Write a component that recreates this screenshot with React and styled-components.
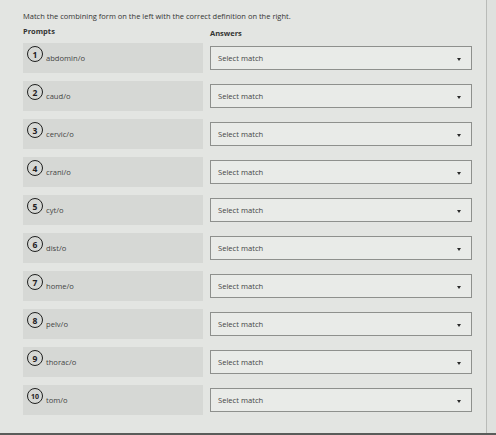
import React from 'react'
import styled, { createGlobalStyle } from "styled-components"

const GlobalStyle = createGlobalStyle`
    html, body {
        margin: 0;
        padding: 0;
        background: #5a5c5a;
    }
`

const Screen = styled.div`
    width: 496px;
    height: 433px;
    box-sizing: border-box;
    background: #dfe1de;
    display: flex;
    font-family: "Open Sans", "Liberation Sans", sans-serif;
`

const Panel = styled.div`
    width: 487px;
    box-sizing: border-box;
    background: #e3e5e2;
    border-right: 1px solid #b9bbb8;
    padding: 11px 0 0 23px;
`

const Instruction = styled.p`
    margin: 0 0 2px;
    font-size: 7.5px;
    color: #333433;
`

const Grid = styled.div`
    display: grid;
    grid-template-columns: 180px 262px;
    column-gap: 7px;
    row-gap: 8px;
    align-items: center;
    width: 453px;
    padding-bottom: 18px;
    border-bottom: 1px solid #b9bbb8;
`

const Heading = styled.div`
    font-size: 7.5px;
    font-weight: 700;
    color: #333433;
    padding-top: ${p => p.$drop || 0}px;
    margin-bottom: -3px;
`

const PromptCell = styled.div`
    height: 30px;
    background: #d6d8d5;
    display: flex;
    align-items: flex-start;
    padding: 3px 0 0 4px;
    box-sizing: border-box;
`

const Badge = styled.span`
    width: 14px;
    height: 14px;
    border: 1.5px solid #1f201f;
    border-radius: 50%;
    display: flex;
    align-items: center;
    justify-content: center;
    font-size: ${p => p.$small ? 7 : 8.5}px;
    font-weight: 700;
    color: #1f201f;
    flex-shrink: 0;
`

const Term = styled.span`
    font-size: 7.6px;
    color: #444544;
    margin: 7px 0 0 3px;
`

const Select = styled.div`
    height: 24px;
    box-sizing: border-box;
    border: 1px solid #8e908d;
    background: #e9ebe8;
    display: flex;
    align-items: center;
    justify-content: space-between;
    padding: 0 10px 0 7px;
    font-size: 7.6px;
    color: #444544;
`

const Caret = styled.span`
    width: 0;
    height: 0;
    border-left: 2.5px solid transparent;
    border-right: 2.5px solid transparent;
    border-top: 3px solid #2a2b2a;
    margin-top: 2px;
`

const terms = ['abdomin/o', 'caud/o', 'cervic/o', 'crani/o', 'cyt/o', 'dist/o', 'home/o', 'pelv/o', 'thorac/o', 'tom/o']

function App() {
    return (
        <>
            <GlobalStyle />
            <Screen>
                <Panel>
                    <Instruction>Match the combining form on the left with the correct definition on the right.</Instruction>
                    <Grid>
                        <Heading>Prompts</Heading>
                        <Heading $drop={5}>Answers</Heading>
                        {terms.map((t, i) => (
                            <React.Fragment key={t}>
                                <PromptCell>
                                    <Badge $small={i === 9}>{i + 1}</Badge>
                                    <Term>{t}</Term>
                                </PromptCell>
                                <Select>
                                    Select match
                                    <Caret />
                                </Select>
                            </React.Fragment>
                        ))}
                    </Grid>
                </Panel>
            </Screen>
        </>
    )
}

export default App
